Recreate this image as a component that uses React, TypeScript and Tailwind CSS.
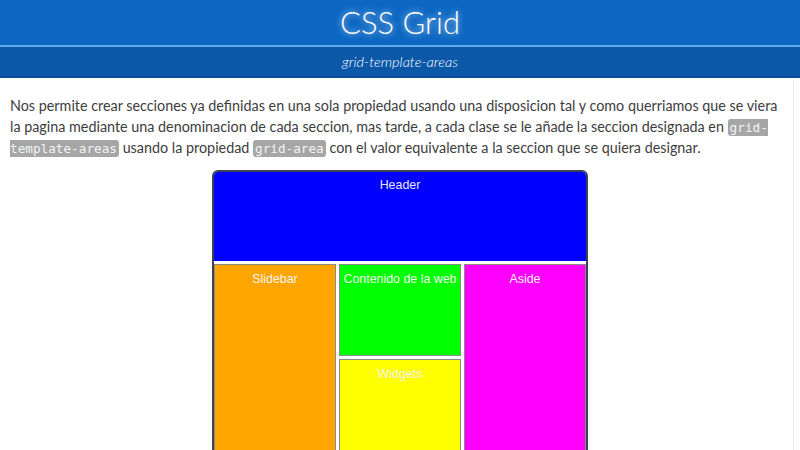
import React from "react";

const Code = ({ children }: { children: React.ReactNode }) => (
  <code className="rounded-[3px] bg-[#a6a6a6] px-[2px] py-[1px] text-[12.7px] text-[#f4f4f4] [font-family:'DejaVu_Sans_Mono',monospace]">
    {children}
  </code>
);

const Cell = ({ label, className }: { label: string; className: string }) => (
  <div className={`border border-[#8a8a8a] pt-[5px] text-center text-[12.4px] text-[#f3f3f3] [font-family:'Liberation_Sans',Arial,sans-serif] ${className}`}>
    {label}
  </div>
);

export default function App() {
  return (
    <div className="min-h-[450px] w-[800px] overflow-hidden bg-white [font-family:Lato,sans-serif]">
      <header>
        <div className="flex h-[45px] items-center justify-center bg-[#0c67c3]">
          <h1 className="text-[31px] font-light leading-none text-white [text-shadow:0_0_6px_rgba(255,255,255,0.8)]">
            CSS Grid
          </h1>
        </div>
        <div className="h-[2px] bg-[#62ade3]" />
        <div className="flex h-[31px] items-center justify-center border-b-[2px] border-[#0a4f96] bg-[#0b58a9]">
          <h2 className="text-[14.5px] font-light italic text-white">grid-template-areas</h2>
        </div>
      </header>
      <main className="relative pb-4 pt-[18px] after:absolute after:bottom-0 after:right-[6px] after:top-0 after:w-px after:bg-[#ececec]">
        <p className="pl-[10px] pr-[18px] text-[14.35px] leading-[20.5px] text-[#3d3d3d]">
          Nos permite crear secciones ya definidas en una sola propiedad usando una disposicion tal y como querriamos que se viera la pagina mediante una denominacion de cada seccion, mas tarde, a cada clase se le añade la seccion designada en <Code>grid-template-areas</Code> usando la propiedad <Code>grid-area</Code> con el valor equivalente a la seccion que se quiera designar.
        </p>
        <div className="mx-auto mt-[10px] grid h-[340px] w-[376px] grid-cols-3 grid-rows-[89px_92px_1fr] gap-[3px] rounded-t-[6px] border-2 border-[#3b4450] bg-white">
          <div className="col-span-3 rounded-t-[4px] bg-[#0000ff] pt-[4px] text-center text-[12.4px] text-[#e8e8ff] [font-family:'Liberation_Sans',Arial,sans-serif]">
            Header
          </div>
          <Cell label="Slidebar" className="row-span-2 bg-[#ffa500]" />
          <Cell label="Contenido de la web" className="bg-[#00ff00]" />
          <Cell label="Aside" className="row-span-2 bg-[#ff00ff]" />
          <Cell label="Widgets" className="bg-[#ffff00]" />
        </div>
      </main>
    </div>
  );
}
